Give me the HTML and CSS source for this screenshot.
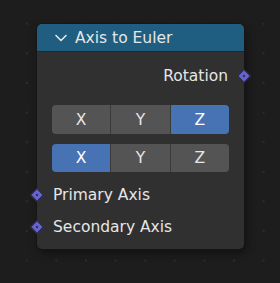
FILE: index.html
```html
<!DOCTYPE html>
<html>
<head>
  <meta charset="utf-8">
  <title>Axis to Euler</title>
  <link rel="stylesheet" href="styles.css">
</head>
<body>
  <div class="canvas">
    <div class="node">
      <div class="node-header">
        <svg class="chevron" width="12" height="8" viewBox="0 0 12 8">
          <path d="M1 1.5 L6 6.5 L11 1.5" fill="none" stroke="#e6e6e6" stroke-width="1.6" stroke-linecap="round" stroke-linejoin="round"/>
        </svg>
        <span class="node-title">Axis to Euler</span>
      </div>
      <div class="node-body">
        <div class="row row-out">
          <span>Rotation</span>
          <i class="socket socket-right"></i>
        </div>
        <div class="seg seg-first">
          <div class="seg-item">X</div>
          <div class="seg-item">Y</div>
          <div class="seg-item active">Z</div>
        </div>
        <div class="seg">
          <div class="seg-item active">X</div>
          <div class="seg-item">Y</div>
          <div class="seg-item">Z</div>
        </div>
        <div class="row row-in row-primary">
          <i class="socket socket-left"></i>
          <span>Primary Axis</span>
        </div>
        <div class="row row-in">
          <i class="socket socket-left"></i>
          <span>Secondary Axis</span>
        </div>
      </div>
    </div>
  </div>
</body>
</html>
```

FILE: styles.css
```css
*{
  margin: 0;
  padding: 0;
  box-sizing: border-box;
}
body{
  width: 280px;
  height: 283px;
  overflow: hidden;
  background-color: #1d1d1d;
  font-family: "DejaVu Sans", sans-serif;
  color: #e6e6e6;
}
.canvas{
  width: 280px;
  height: 283px;
  padding: 24px 0 0 37px;
  background-image: radial-gradient(circle, #2c2c2c 1px, transparent 1.5px);
  background-size: 29.6px 29.6px;
  background-position: 12px 9px;
}
.node{
  position: relative;
  width: 207px;
  height: 225px;
  background-color: #303030;
  border-radius: 5px;
  box-shadow: 0 0 0 1px #161616, 2px 4px 10px rgba(0, 0, 0, 0.45);
}
.node-header{
  display: flex;
  align-items: center;
  height: 28px;
  padding-left: 18px;
  background-color: #1f5e80;
  border-radius: 5px 5px 0 0;
  border-bottom: 1px solid #262626;
}
.chevron{
  margin-right: 8px;
}
.node-title{
  font-size: 15.5px;
}
.node-body{
  display: flex;
  flex-direction: column;
  padding: 13px 15px 0 15px;
}
.row{
  position: relative;
  display: flex;
  align-items: center;
  height: 22px;
  font-size: 15.5px;
}
.row-out{
  justify-content: flex-end;
  padding-right: 1px;
}
.row-in{
  padding-left: 1px;
  margin-top: 10px;
}
.row-primary{
  margin-top: 12px;
}
.socket{
  position: absolute;
  top: 6px;
  width: 10px;
  height: 10px;
  background-color: #6565cc;
  border: 1px solid #1a1a2a;
  transform: rotate(45deg);
}
.socket::after{
  content: "";
  position: absolute;
  left: 3px;
  top: 3px;
  width: 2px;
  height: 2px;
  background-color: #2a2a5c;
}
.socket-right{
  right: -20px;
}
.socket-left{
  left: -20px;
}
.seg{
  display: flex;
  height: 28px;
  margin-top: 10px;
  border-radius: 4px;
  overflow: hidden;
}
.seg-first{
  height: 29px;
  margin-top: 18px;
}
.seg-item{
  flex: 1;
  display: flex;
  align-items: center;
  justify-content: center;
  font-size: 15.5px;
  background-color: #545454;
  border-left: 1px solid #3a3a3a;
}
.seg-item:first-child{
  border-left: none;
}
.seg-item.active{
  background-color: #4772b3;
  color: #ffffff;
}
```
